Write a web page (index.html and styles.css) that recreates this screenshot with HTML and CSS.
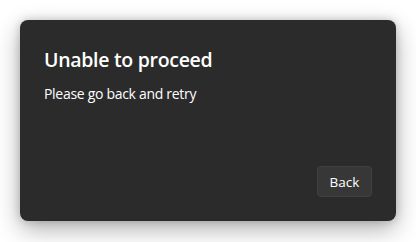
FILE: index.html
```html
<!DOCTYPE html>
<html>
<head>
<meta charset="utf-8">
<link rel="stylesheet" href="styles.css">
</head>
<body>
<div class="dialog">
  <div class="content">
    <h1 class="title">Unable to proceed</h1>
    <p class="message">Please go back and retry</p>
  </div>
  <div class="footer">
    <button class="btn">Back</button>
  </div>
</div>
</body>
</html>
```
FILE: styles.css
```css
html, body {
  margin: 0;
  padding: 0;
  background: #ffffff;
}
body {
  width: 416px;
  height: 242px;
  padding: 20px;
  box-sizing: border-box;
  font-family: "Open Sans", "Noto Sans", sans-serif;
}
.dialog {
  width: 376px;
  height: 201px;
  box-sizing: border-box;
  background: #2b2b2b;
  border-radius: 8px;
  box-shadow: 0 8px 24px rgba(0, 0, 0, 0.32), 0 0 8px rgba(0, 0, 0, 0.18);
  padding: 26px 24px 24px 24px;
  display: flex;
  flex-direction: column;
  justify-content: space-between;
  color: #ffffff;
}
.title {
  margin: 0;
  font-size: 19.5px;
  line-height: 28px;
  font-weight: 600;
  letter-spacing: -0.3px;
}
.message {
  margin: 10px 0 0 0;
  font-size: 14px;
  line-height: 20px;
  letter-spacing: -0.3px;
}
.footer {
  display: flex;
  justify-content: flex-end;
}
.btn {
  width: 55px;
  height: 31px;
  background: #373737;
  border: 1px solid #404040;
  border-radius: 4px;
  color: #ffffff;
  font-family: inherit;
  font-size: 13.5px;
  padding: 0;
}
```
